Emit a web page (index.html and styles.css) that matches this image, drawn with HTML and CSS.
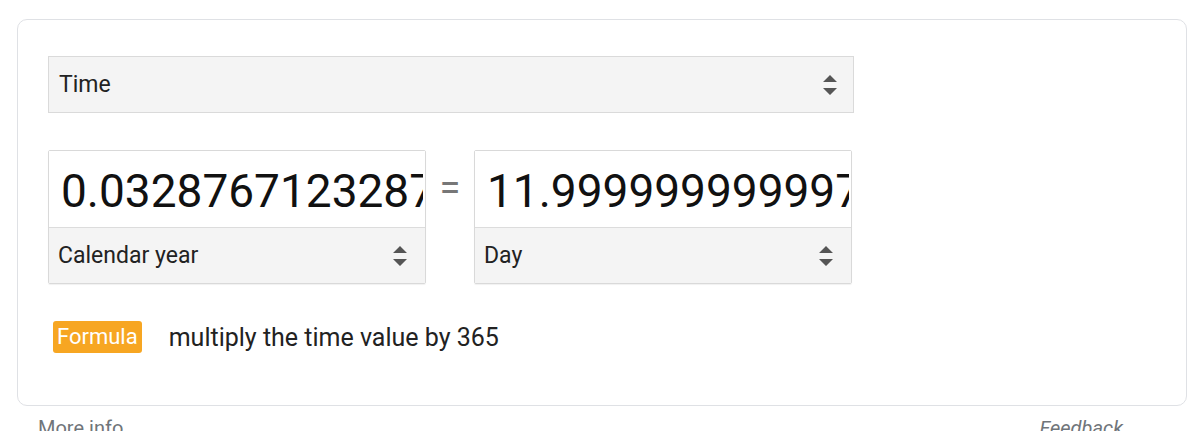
FILE: index.html
```html
<!DOCTYPE html>
<html lang="en">
<head>
    <meta charset="UTF-8">
    <meta name="viewport" content="width=device-width, initial-scale=1.0">
    <title>Unit converter</title>
    <link rel="stylesheet" href="styles.css">
</head>
<body>
    <div class="card">
        <div class="select select-main">
            <span>Time</span>
            <svg class="arrows" width="14" height="20" viewBox="0 0 14 20"><path d="M7 0 L14 7 L0 7 Z M0 13 L14 13 L7 20 Z" fill="#555"/></svg>
        </div>

        <div class="convert-row">
            <div class="unit-box">
                <input type="text" class="value" value="0.0328767123287671">
                <div class="select select-unit">
                    <span>Calendar year</span>
                    <svg class="arrows" width="14" height="20" viewBox="0 0 14 20"><path d="M7 0 L14 7 L0 7 Z M0 13 L14 13 L7 20 Z" fill="#555"/></svg>
                </div>
            </div>
            <div class="equals">=</div>
            <div class="unit-box">
                <input type="text" class="value" value="11.999999999997">
                <div class="select select-unit">
                    <span>Day</span>
                    <svg class="arrows" width="14" height="20" viewBox="0 0 14 20"><path d="M7 0 L14 7 L0 7 Z M0 13 L14 13 L7 20 Z" fill="#555"/></svg>
                </div>
            </div>
        </div>

        <div class="formula">
            <span class="badge">Formula</span>
            <span class="formula-text">multiply the time value by 365</span>
        </div>
    </div>

    <div class="footer">
        <a class="more">More info</a>
        <a class="feedback">Feedback</a>
    </div>
</body>
</html>
```

FILE: styles.css
```css
body {
    margin: 0;
    padding: 19px 13px 0 17px;
    font-family: Roboto, Arial, sans-serif;
    background-color: #fff;
    color: #222;
}
.card {
    border: 1px solid #dfe1e5;
    border-radius: 10px;
    padding: 36px 30px 52px 30px;
}
.select {
    display: flex;
    align-items: center;
    justify-content: space-between;
    box-sizing: border-box;
    background-color: #f4f4f4;
    color: #222;
    font-size: 23px;
}
.select-main {
    width: 806px;
    height: 57px;
    border: 1px solid #dadada;
    padding: 0 16px 0 10px;
}
.select-main span {
    margin-top: -1px;
}
.convert-row {
    display: flex;
    align-items: flex-start;
    margin-top: 37px;
}
.unit-box {
    width: 378px;
    box-sizing: border-box;
    border: 1px solid #d9d9d9;
    border-radius: 2px;
    box-shadow: 0 1px 1px rgba(0, 0, 0, 0.06);
    display: flex;
    flex-direction: column;
}
.value {
    box-sizing: border-box;
    height: 77px;
    width: 100%;
    border: none;
    border-bottom: 1px solid #dcdcdc;
    padding: 4px 2px 0 12px;
    font-family: Roboto, Arial, sans-serif;
    font-size: 46px;
    color: #111;
    background: #fff;
    outline: none;
}
.select-unit {
    height: 55px;
    padding: 0 18px 0 9px;
}
.equals {
    width: 48px;
    text-align: center;
    color: #777;
    font-size: 38px;
    line-height: 1;
    margin-top: 19px;
}
.formula {
    display: flex;
    align-items: center;
    margin-top: 37px;
    padding-left: 5px;
}
.badge {
    background-color: #f7a622;
    color: #fff;
    font-size: 22px;
    height: 32px;
    line-height: 31px;
    padding: 0 4px;
    border-radius: 3px;
}
.formula-text {
    margin-left: 27px;
    font-size: 25px;
    color: #222;
}
.footer {
    display: flex;
    justify-content: space-between;
    padding: 10px 64px 0 21px;
    font-size: 20px;
    color: #70757a;
}
.feedback {
    font-style: italic;
}
```
